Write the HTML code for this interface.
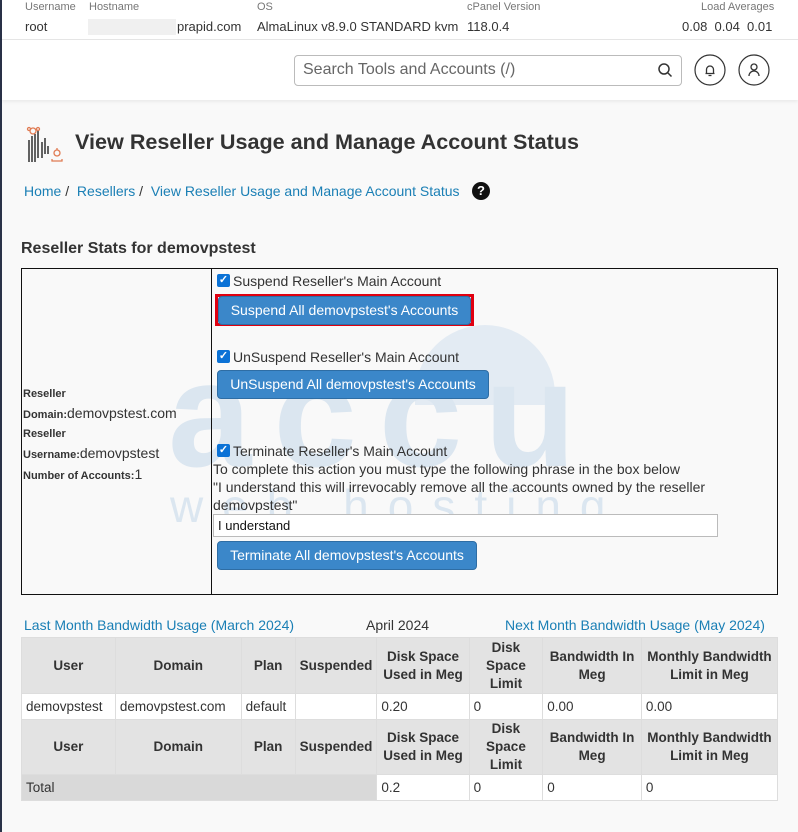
<!DOCTYPE html>
<html><head><meta charset="utf-8"><style>
*{box-sizing:border-box;margin:0;padding:0}
body{width:798px;height:832px;overflow:hidden;background:#f9f9f9;font-family:"Liberation Sans",sans-serif;color:#333;position:relative}
.a{position:absolute;white-space:nowrap}
.lbl{font-size:11px;color:#777}
.val{font-size:13px;color:#333}
a{color:#1a7fb5;text-decoration:none}
.btn{position:absolute;background:#3b87c9;color:#fff;border:1px solid #2e6da4;border-radius:4px;font-size:14px;text-align:center;line-height:27px;height:29px}
.cb{position:absolute;width:13px;height:13px;background:#0b72d6;border-radius:2px;color:#fff;font-size:11px;line-height:13px;text-align:center;font-weight:bold}
.t2{position:absolute;left:21px;top:637px;width:757px;border-collapse:collapse;font-size:13.5px;font-family:"Liberation Sans Narrow","Liberation Sans",sans-serif}
.t2 td,.t2 th{border:1px solid #ddd;padding:0 4px}
.t2 th{background:#e3e3e3;font-weight:bold;text-align:center;line-height:18px;color:#333}
.t2 td{background:#fff;height:26px}
</style></head><body>
<div class="a" style="left:0;top:0;width:2px;height:832px;background:#2a3248"></div>
<div class="a" style="left:2px;top:0;width:796px;height:100px;background:#fff;box-shadow:0 2px 3px rgba(0,0,0,.06)"></div>
<div class="a" style="left:2px;top:39px;width:796px;height:1px;background:#e5e5e5"></div>
<div class="a lbl" style="left:25px;top:1px">Username</div>
<div class="a lbl" style="left:89px;top:1px">Hostname</div>
<div class="a lbl" style="left:257px;top:1px">OS</div>
<div class="a lbl" style="left:467px;top:1px">cPanel Version</div>
<div class="a lbl" style="left:701px;top:1px">Load Averages</div>
<div class="a val" style="left:25px;top:19px">root</div>
<div class="a" style="left:88px;top:19px;width:88px;height:16px;background:#f0f0f0"></div>
<div class="a val" style="left:177px;top:19px">prapid.com</div>
<div class="a val" style="left:257px;top:19px">AlmaLinux v8.9.0 STANDARD kvm</div>
<div class="a val" style="left:467px;top:19px">118.0.4</div>
<div class="a val" style="left:682px;top:19px">0.08&nbsp; 0.04&nbsp; 0.01</div>
<div class="a" style="left:294px;top:55px;width:388px;height:31px;border:1px solid #bbb;border-radius:4px;background:#fff"></div>
<div class="a" style="left:303px;top:61px;font-size:16px;color:#666">Search Tools and Accounts (/)</div>
<svg class="a" style="left:657px;top:62px" width="16" height="16" viewBox="0 0 16 16"><circle cx="7" cy="7" r="5" fill="none" stroke="#333" stroke-width="1.5"/><path d="M11 11l3.5 3.5" stroke="#333" stroke-width="1.5"/></svg>
<svg class="a" style="left:694px;top:54px" width="32" height="32" viewBox="0 0 32 32"><circle cx="16" cy="16" r="15" fill="none" stroke="#333" stroke-width="1.2"/><path d="M11.5 19.5h9M12.5 19.5v-4a3.5 3.5 0 0 1 7 0v4M14.5 21.5h3" fill="none" stroke="#333" stroke-width="1.3"/></svg>
<svg class="a" style="left:738px;top:54px" width="32" height="32" viewBox="0 0 32 32"><circle cx="16" cy="16" r="15" fill="none" stroke="#333" stroke-width="1.2"/><circle cx="16" cy="13" r="3" fill="none" stroke="#333" stroke-width="1.3"/><path d="M11 22a5 5 0 0 1 10 0" fill="none" stroke="#333" stroke-width="1.3"/></svg>

<div class="a" style="left:415px;top:325px;width:140px;height:80px;border-radius:70px 70px 0 0;background:#e3ebf3"></div>
<div class="a" style="left:168px;top:339px;font-size:150px;font-weight:bold;color:#dbe6f0;letter-spacing:22px;line-height:150px">accu</div>
<div class="a" style="left:170px;top:478px;font-size:46px;color:#dbe6f0;letter-spacing:19px;line-height:56px">web hosting</div>

<svg class="a" style="left:25px;top:126px" width="40" height="38" viewBox="0 0 40 38"><g stroke="#111" stroke-width="1.3"><path d="M4 14v22M7 10v26M10 8v28M13 4v28M17 16v16M20 12v16M23 20v8"/></g><g stroke="#e07b53" fill="none" stroke-width="1.3"><circle cx="8" cy="5" r="3"/><circle cx="13" cy="3" r="1.5"/><circle cx="4" cy="3" r="1.5"/><circle cx="32" cy="27" r="3"/><path d="M27 33v2h10v-2"/><path d="M32 22v2"/></g></svg>
<div class="a" style="left:75px;top:129px;font-size:21.6px;font-weight:bold;color:#333">View Reseller Usage and Manage Account Status</div>
<div class="a" style="left:24px;top:183px;font-size:14px"><a>Home</a> / &nbsp;<a>Resellers</a> / &nbsp;<a>View Reseller Usage and Manage Account Status</a></div>
<div class="a" style="left:472px;top:182px;width:18px;height:18px;border-radius:50%;background:#111;color:#fff;font-size:13px;font-weight:bold;text-align:center;line-height:18px">?</div>
<div class="a" style="left:21px;top:240px;font-size:16px;font-weight:bold;color:#333">Reseller Stats for demovpstest</div>

<div class="a" style="left:21px;top:268px;width:757px;height:327px;border:1px solid #111"></div>
<div class="a" style="left:211px;top:268px;width:1px;height:327px;background:#111"></div>
<div class="a" style="left:23px;top:385px;font-size:11px;line-height:19px;color:#333">
<b>Reseller</b><br><b>Domain:</b><span style="font-size:14px">demovpstest.com</span><br><b>Reseller</b><br><b>Username:</b><span style="font-size:14px">demovpstest</span><br><b>Number of Accounts:</b><span style="font-size:14px">1</span></div>

<div class="cb" style="left:217px;top:274px">✓</div>
<div class="a" style="left:233px;top:273px;font-size:14px">Suspend Reseller's Main Account</div>
<div class="a" style="left:215px;top:294px;width:259px;height:32px;border:3px solid #e00010"></div>
<div class="btn" style="left:218px;top:296px;width:253px">Suspend All demovpstest's Accounts</div>
<div class="cb" style="left:217px;top:350px">✓</div>
<div class="a" style="left:233px;top:349px;font-size:14px">UnSuspend Reseller's Main Account</div>
<div class="btn" style="left:217px;top:370px;width:272px">UnSuspend All demovpstest's Accounts</div>
<div class="cb" style="left:217px;top:444px">✓</div>
<div class="a" style="left:233px;top:443px;font-size:14px">Terminate Reseller's Main Account</div>
<div class="a" style="left:213px;top:460px;font-size:14px;line-height:18px">To complete this action you must type the following phrase in the box below<br>"I understand this will irrevocably remove all the accounts owned by the reseller<br>demovpstest"</div>
<div class="a" style="left:213px;top:514px;width:505px;height:23px;border:1px solid #bbb;background:#fff;font-size:13px;padding:3px 4px;color:#111">I understand</div>
<div class="btn" style="left:217px;top:541px;width:260px">Terminate All demovpstest's Accounts</div>

<div class="a" style="left:24px;top:617px;font-size:14px"><a>Last Month Bandwidth Usage (March 2024)</a></div>
<div class="a" style="left:366px;top:617px;font-size:14px">April 2024</div>
<div class="a" style="left:505px;top:617px;font-size:14px"><a>Next Month Bandwidth Usage (May 2024)</a></div>

<table class="t2">
<colgroup><col style="width:94px"><col style="width:126px"><col style="width:54px"><col style="width:80px"><col style="width:93px"><col style="width:74px"><col style="width:99px"><col style="width:137px"></colgroup>
<tr style="height:56px"><th>User</th><th>Domain</th><th>Plan</th><th>Suspended</th><th>Disk Space Used in Meg</th><th>Disk Space Limit</th><th>Bandwidth In Meg</th><th>Monthly Bandwidth Limit in Meg</th></tr>
<tr><td>demovpstest</td><td>demovpstest.com</td><td>default</td><td></td><td>0.20</td><td>0</td><td>0.00</td><td>0.00</td></tr>
<tr style="height:55px"><th>User</th><th>Domain</th><th>Plan</th><th>Suspended</th><th>Disk Space Used in Meg</th><th>Disk Space Limit</th><th>Bandwidth In Meg</th><th>Monthly Bandwidth Limit in Meg</th></tr>
<tr><td colspan="4" style="background:#d9d9d9">Total</td><td>0.2</td><td>0</td><td>0</td><td>0</td></tr>
</table>
</body></html>
